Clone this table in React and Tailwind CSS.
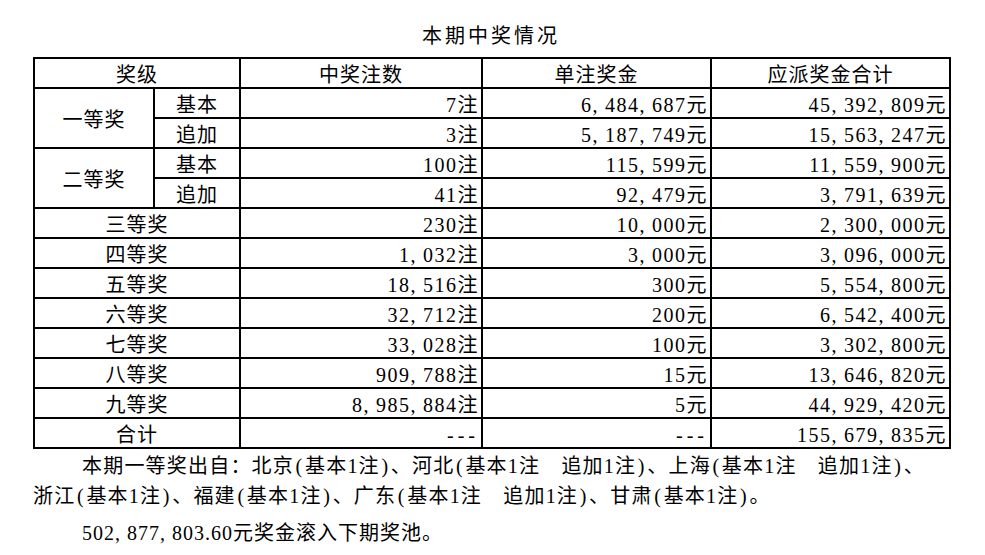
const rows = [
  { grade: '一等奖', sub: '基本', count: '7注', unit: '6,484,687元', total: '45,392,809元', span: 2 },
  { sub: '追加', count: '3注', unit: '5,187,749元', total: '15,563,247元' },
  { grade: '二等奖', sub: '基本', count: '100注', unit: '115,599元', total: '11,559,900元', span: 2 },
  { sub: '追加', count: '41注', unit: '92,479元', total: '3,791,639元' },
  { grade: '三等奖', count: '230注', unit: '10,000元', total: '2,300,000元' },
  { grade: '四等奖', count: '1,032注', unit: '3,000元', total: '3,096,000元' },
  { grade: '五等奖', count: '18,516注', unit: '300元', total: '5,554,800元' },
  { grade: '六等奖', count: '32,712注', unit: '200元', total: '6,542,400元' },
  { grade: '七等奖', count: '33,028注', unit: '100元', total: '3,302,800元' },
  { grade: '八等奖', count: '909,788注', unit: '15元', total: '13,646,820元' },
  { grade: '九等奖', count: '8,985,884注', unit: '5元', total: '44,929,420元' },
  { grade: '合计', count: '---', unit: '---', total: '155,679,835元' },
];

// SimSun-like commas: glyph at the left of a half-em box
function Num({ text }) {
  const parts = text.split(',');
  return (
    <>
      {parts.map((p, i) => (
        <span key={i}>
          {i > 0 && (
            <>
              ,<span className="inline-block w-[6px]" />
            </>
          )}
          {p}
        </span>
      ))}
    </>
  );
}

// half-em brackets, like the original font
function Txt({ text }) {
  return (
    <>
      {text.split(/([()])/).map((p, i) =>
        p === '(' || p === ')' ? (
          <span key={i} className="inline-block w-[11px] text-center">{p}</span>
        ) : (
          <span key={i}>{p}</span>
        )
      )}
    </>
  );
}

const cell = 'border-2 border-black h-[30px] p-0 pt-[4px] leading-none';
const numCell = `${cell} text-right pr-[2px] tracking-[1.5px]`;

export default function App() {
  return (
    <div
      className="w-[985px] h-[555px] bg-white text-black pl-[33px] pt-[21px] text-[20px]"
      style={{ fontFamily: "'Liberation Serif', 'Noto Sans CJK SC', serif" }}
    >
      <div className="w-[916px] text-center leading-[30px] tracking-[3px]">本期中奖情况</div>

      <table className="mt-[6px] w-[916px] table-fixed border-collapse tracking-[1px]">
        <colgroup>
          <col className="w-[120px]" />
          <col className="w-[86px]" />
          <col className="w-[242px]" />
          <col className="w-[229px]" />
          <col className="w-[239px]" />
        </colgroup>
        <thead>
          <tr>
            <th colSpan={2} className={`${cell} font-normal text-center`}>奖级</th>
            <th className={`${cell} font-normal text-center`}>中奖注数</th>
            <th className={`${cell} font-normal text-center`}>单注奖金</th>
            <th className={`${cell} font-normal text-center`}>应派奖金合计</th>
          </tr>
        </thead>
        <tbody>
          {rows.map((r, i) => (
            <tr key={i}>
              {r.sub ? (
                <>
                  {r.grade && (
                    <td rowSpan={r.span} className={`${cell} text-center`}>{r.grade}</td>
                  )}
                  <td className={`${cell} text-center`}>{r.sub}</td>
                </>
              ) : (
                <td colSpan={2} className={`${cell} text-center`}>{r.grade}</td>
              )}
              {[r.count, r.unit, r.total].map((v, j) => (
                <td key={j} className={numCell}>
                  {v === '---' ? <span className="tracking-[4px]">---</span> : <Num text={v} />}
                </td>
              ))}
            </tr>
          ))}
        </tbody>
      </table>

      <p className="w-[920px] leading-[30px] tracking-[1.2px] mt-[2px] whitespace-nowrap">
        <span className="pl-[49px]">
          <Txt text="本期一等奖出自：北京(基本1注)、河北(基本1注　追加1注)、上海(基本1注　追加1注)、" />
        </span>
        <br />
        <Txt text="浙江(基本1注)、福建(基本1注)、广东(基本1注　追加1注)、甘肃(基本1注)。" />
      </p>
      <p className="pl-[49px] mt-[7px] leading-[30px] tracking-[1px]">
        <Num text="502,877,803.60" />元奖金滚入下期奖池。
      </p>
    </div>
  );
}
